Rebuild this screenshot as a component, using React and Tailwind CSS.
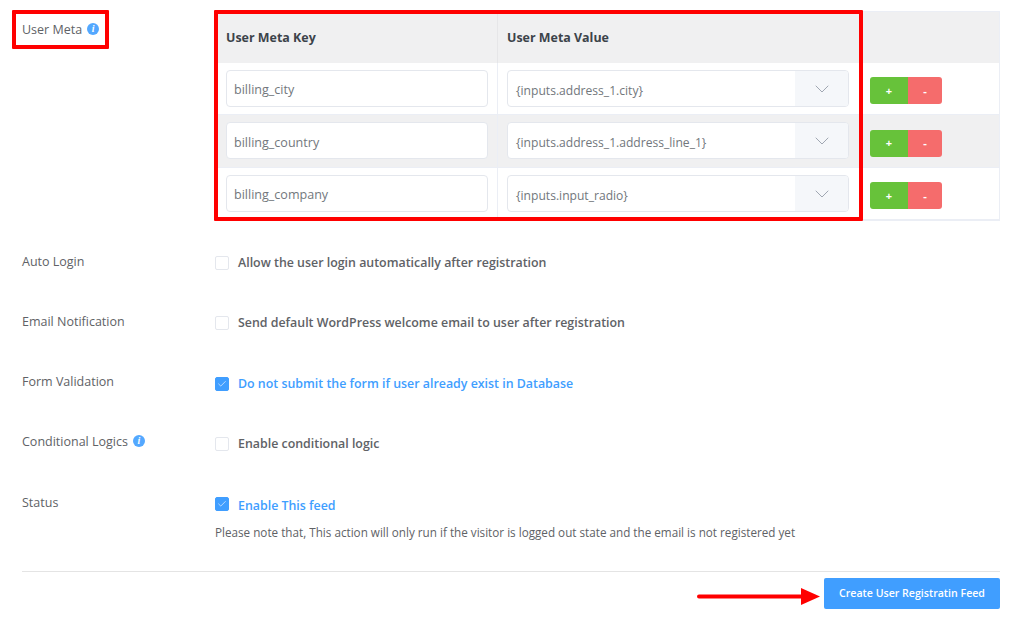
import React from 'react';
import { Check, ChevronDown } from 'lucide-react';

const metaRows = [
  { key: 'billing_city', value: '{inputs.address_1.city}', height: 'h-[51.5px]' },
  { key: 'billing_country', value: '{inputs.address_1.address_line_1}', height: 'h-[53px]', striped: true },
  { key: 'billing_company', value: '{inputs.input_radio}', height: 'h-[52.5px]' },
];

const options = [
  { label: 'Auto Login', text: 'Allow the user login automatically after registration' },
  { label: 'Email Notification', text: 'Send default WordPress welcome email to user after registration' },
  { label: 'Form Validation', text: 'Do not submit the form if user already exist in Database', checked: true },
  { label: 'Conditional Logics', text: 'Enable conditional logic', info: true },
];

const InfoIcon = () => (
  <span className="ml-[5px] inline-flex h-3 w-3 items-center justify-center rounded-full bg-[#53a8ff] font-['Liberation_Serif',serif] text-[10px] font-bold italic leading-none text-white">
    i
  </span>
);

const Checkbox = ({ checked }) => (
  <span
    className={`flex h-[14px] w-[14px] shrink-0 items-center justify-center rounded-[2px] border ${
      checked ? 'border-[#409eff] bg-[#409eff]' : 'border-[#e4e7ed] bg-white'
    }`}
  >
    {checked && <Check className="h-[10px] w-[10px] text-white" strokeWidth={1.5} />}
  </span>
);

const OptionRow = ({ label, text, checked, info }) => (
  <div className="flex h-[60.3px]">
    <div className="flex w-[193px] items-start pt-[1.5px] text-[12.5px] leading-[18px] text-[#606266]">
      {label}
      {info && <span className="mt-[2px] flex"><InfoIcon /></span>}
    </div>
    <div className="flex items-start gap-[9px] pt-[2px]">
      <span className="mt-[3px]"><Checkbox checked={checked} /></span>
      <span className={`text-[12.4px] font-semibold leading-[19px] ${checked ? 'text-[#409eff]' : 'text-[#606266]'}`}>{text}</span>
    </div>
  </div>
);

export default function App() {
  return (
    <div className="relative h-[618px] w-[1024px] overflow-hidden bg-white pl-[22px] pr-[24px] pt-[11px] font-['Open_Sans',sans-serif]">
      {/* User meta */}
      <div className="flex h-[210px]">
        <div className="flex w-[193px] items-start pt-[10px] text-[12.5px] leading-[18px] text-[#606266]">
          User Meta
          <span className="mt-[2px] flex"><InfoIcon /></span>
        </div>
        <div className="flex h-[210px] flex-1 flex-col border border-[#ebeef5]">
          <div className="flex h-[51px] bg-[#f0f0f1] text-[12.45px] font-bold text-[#3c434a]">
            <div className="flex w-[281px] items-center pl-[10px] pt-[2px]">User Meta Key</div>
            <div className="flex w-[363px] items-center border-l border-[#e6e6e8] pl-[9px] pt-[2px]">User Meta Value</div>
          </div>
          {metaRows.map(row => (
            <div
              key={row.key}
              className={`flex ${row.height} items-center border-b border-[#ebeef5] ${row.striped ? 'bg-[#f0f0f1]' : 'bg-white'}`}
            >
              <div className="w-[281px] pl-[10px]">
                <div className="flex h-[37.5px] w-[262px] items-center rounded-[4px] border border-[#e4e7ed] bg-white pl-[7px] pt-[5px] text-[12.55px] text-[#72777c]">
                  {row.key}
                </div>
              </div>
              <div className="flex h-full w-[363px] items-center border-l border-[#ebeef5] pl-[9px]">
                <div className="flex h-[37.5px] w-[342px] items-center overflow-hidden rounded-[4px] border border-[#e4e7ed] bg-white text-[12.1px] text-[#72777c]">
                  <span className="flex-1 pl-2 pt-[5px]">{row.value}</span>
                  <span className="flex h-full w-[53px] items-center justify-center bg-[#f5f7fa] pt-[1px]">
                    <ChevronDown className="h-6 w-6 text-[#a0a7b2]" strokeWidth={1} />
                  </span>
                </div>
              </div>
              <div className="mt-[5px] flex pl-[10px]">
                <button className="h-[27px] w-[38px] rounded-l-[3px] bg-[#67c23a] text-[11px] font-bold text-white">+</button>
                <button className="h-[27px] w-[34px] rounded-r-[3px] bg-[#f56c6c] text-[11px] font-bold text-white">-</button>
              </div>
            </div>
          ))}
        </div>
      </div>

      {/* Options */}
      <div className="pt-[30px]">
        {options.map(option => (
          <OptionRow key={option.label} {...option} />
        ))}
        <div className="flex">
          <div className="w-[193px] pt-[1.5px] text-[12.5px] leading-[18px] text-[#606266]">Status</div>
          <div>
            {/* the feed label is clipped by its container in the source screen */}
            <div className="mt-[5px] flex h-[14px] items-start gap-[9px]">
              <Checkbox checked />
              <span className="h-[13px] overflow-hidden text-[12.4px] font-semibold leading-[17px] text-[#409eff]">Enable This feed</span>
            </div>
            <p className="mt-[12px] text-[11.7px] leading-[18px] text-[#606266]">
              Please note that, This action will only run if the visitor is logged out state and the email is not registered yet
            </p>
          </div>
        </div>
      </div>

      {/* Footer */}
      <div className="mt-[30px] flex h-[38px] items-end justify-end border-t border-[#e4e4e4]">
        <button className="flex h-[31px] w-[176px] items-center justify-center rounded-[2px] bg-[#409eff] pt-[1px] text-[10.6px] font-semibold text-white">
          Create User Registratin Feed
        </button>
      </div>

      {/* Annotations */}
      <div className="absolute left-[12px] top-[10px] h-[39px] w-[97px] rounded-[1px] border-4 border-[#ff0000]" />
      <div className="absolute left-[214px] top-[10px] h-[211px] w-[649px] rounded-[1px] border-4 border-[#ff0000]" />
      <svg className="absolute left-[697px] top-[588px]" width="124" height="18" viewBox="0 0 124 18">
        <rect x="0" y="6.5" width="106" height="4" rx="2" fill="#ff0000" />
        <polygon points="104,0 123,8.5 104,17" fill="#ff0000" />
      </svg>
    </div>
  );
}
